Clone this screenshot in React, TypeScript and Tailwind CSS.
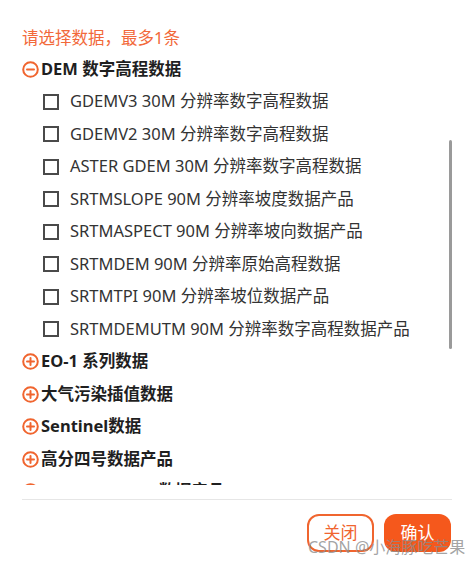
import { useState } from "react";

interface Group {
  name: string;
  children?: string[];
}

const groups: Group[] = [
  {
    name: "DEM 数字高程数据",
    children: [
      "GDEMV3 30M 分辨率数字高程数据",
      "GDEMV2 30M 分辨率数字高程数据",
      "ASTER GDEM 30M 分辨率数字高程数据",
      "SRTMSLOPE 90M 分辨率坡度数据产品",
      "SRTMASPECT 90M 分辨率坡向数据产品",
      "SRTMDEM 90M 分辨率原始高程数据",
      "SRTMTPI 90M 分辨率坡位数据产品",
      "SRTMDEMUTM 90M 分辨率数字高程数据产品",
    ],
  },
  { name: "EO-1 系列数据" },
  { name: "大气污染插值数据" },
  { name: "Sentinel数据" },
  { name: "高分四号数据产品" },
  { name: "Landsat-8 OLI 数据产品" },
];

// Round toggle icon: minus when open, plus when closed
function ToggleIcon({ open }: { open: boolean }) {
  return (
    <svg width="17" height="17" viewBox="0 0 17 17" className="shrink-0">
      <circle cx="8.5" cy="8.5" r="7.3" fill="#fff" stroke="#f0652f" strokeWidth="2" />
      <path d="M5 8.5h7" stroke="#f0652f" strokeWidth="2" strokeLinecap="round" />
      {!open && <path d="M8.5 5v7" stroke="#f0652f" strokeWidth="2" strokeLinecap="round" />}
    </svg>
  );
}

export default function App() {
  const [open, setOpen] = useState<Record<string, boolean>>({ "DEM 数字高程数据": true });
  const [checked, setChecked] = useState<string | null>(null);

  return (
    <div
      className="relative w-[474px] h-[562px] overflow-hidden bg-white px-[22px] pt-[26px]"
      style={{ fontFamily: '"Noto Sans", "Noto Sans CJK SC", sans-serif' }}
    >
      <div className="h-[27px] text-[16.5px] leading-[24px] text-[#f2693a]">请选择数据，最多1条</div>

      {/* Tree list */}
      <div className="relative h-[432px] overflow-hidden">
        {groups.map((g) => {
          const isOpen = !!open[g.name];
          return (
            <div key={g.name}>
              <div
                className="flex items-center gap-[2px] h-[32.5px] cursor-pointer"
                onClick={() => setOpen({ ...open, [g.name]: !isOpen })}
              >
                <ToggleIcon open={isOpen} />
                <span className="text-[16.5px] font-bold text-[#1f1f1f]">{g.name}</span>
              </div>
              {isOpen &&
                g.children?.map((c) => (
                  <label key={c} className="flex items-center h-[32.5px] pl-[21px] cursor-pointer">
                    <span
                      className={`w-[16px] h-[16px] border-2 shrink-0 ${
                        checked === c ? "border-[#f0652f] bg-[#f0652f]" : "border-[#4a4a4a] bg-white"
                      }`}
                      onClick={() => setChecked(checked === c ? null : c)}
                    />
                    <span className="ml-[11px] text-[16.5px] text-[#333]">{c}</span>
                  </label>
                ))}
            </div>
          );
        })}
        {/* scrollbar thumb */}
        <div className="absolute right-[0px] top-[87px] w-[3px] h-[209px] rounded-full bg-[#9a9a9a]" />
      </div>

      <div className="mt-[14px] border-t border-[#e6e6e6]" />

      <div className="flex justify-end gap-[10px] mt-[14px] pr-[1px]">
        <button className="w-[67px] h-[38px] rounded-[12px] border-2 border-[#f0652f] bg-white text-[17px] text-[#f0652f]">
          关闭
        </button>
        <button className="w-[67px] h-[38px] rounded-[12px] bg-[#f5581c] text-[17px] text-white">确认</button>
      </div>

      {/* watermark */}
      <div className="absolute left-[308px] top-[535px] text-[16px] text-[#8c8c8c]/80 whitespace-nowrap">
        CSDN @小海豚吃芒果
      </div>
    </div>
  );
}
